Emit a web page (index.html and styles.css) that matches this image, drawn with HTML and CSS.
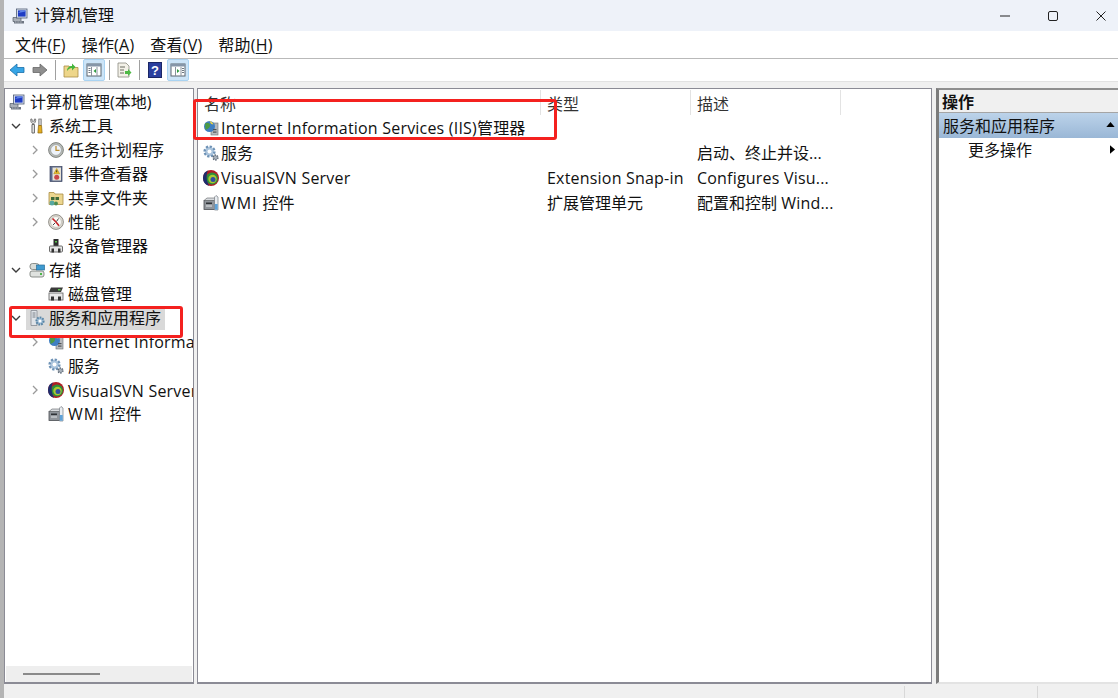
FILE: index.html
```html
<!DOCTYPE html>
<html lang="zh-CN">
<head>
<meta charset="utf-8">
<title>计算机管理</title>
<link rel="stylesheet" href="styles.css">
</head>
<body>
<svg class="defs" width="0" height="0">
  <symbol id="i-computer" viewBox="0 0 16 16">
    <path d="M1 9.500h8v4H1z" fill="#aab0b8" stroke="#555c66" stroke-width=".7"/>
    <rect x="4.500" y="1" width="10.500" height="9" fill="#dfe6f2" stroke="#4d5a73" stroke-width=".8"/>
    <rect x="5.900" y="2.400" width="7.700" height="6.200" fill="#1f3cc4"/>
    <path d="M6 5l3-2.600h4.600v1z" fill="#5f84e8"/>
    <path d="M2 15.500h10v-2.500H2z" fill="#6f7783"/>
    <path d="M3 14h7" stroke="#d7dade" stroke-width=".7" stroke-dasharray="1 .6"/>
  </symbol>
  <symbol id="i-tools" viewBox="0 0 16 16">
    <path d="M3 6.500h2.400v8.500H3z" fill="#eee" stroke="#666" stroke-width="1"/>
    <path d="M1.800 1c-.4 2.500.5 4.500 2.400 4.500S7 3.500 6.600 1L5.400 1v2.200H3V1z" fill="#e6e6e6" stroke="#666" stroke-width=".8"/>
    <rect x="9.800" y="1" width="2.400" height="6.500" fill="#cfcfcf" stroke="#666" stroke-width=".7"/>
    <path d="M9.500 7.500h3l.6 7.500H8.900z" fill="#e5ad1f" stroke="#8a6510" stroke-width=".7"/>
  </symbol>
  <symbol id="i-clock" viewBox="0 0 16 16">
    <circle cx="8" cy="8" r="7.400" fill="#b9bdb9" stroke="#6a6d69" stroke-width=".8"/>
    <circle cx="8" cy="8" r="5.400" fill="#eef3fa" stroke="#8c8f8c" stroke-width=".6"/>
    <path d="M8 4v4.300h3.500" fill="none" stroke="#b98a2a" stroke-width="1.200"/>
  </symbol>
  <symbol id="i-event" viewBox="0 0 16 16">
    <rect x="2" y="0.500" width="12" height="15" fill="#5b6b8f" stroke="#3c4560" stroke-width=".7"/>
    <rect x="4.500" y="1.500" width="8.500" height="13" fill="#e9e4d6"/>
    <path d="M8.700 2.500l2.900 5.300H5.800z" fill="#f0c020" stroke="#a37c10" stroke-width=".5"/>
    <path d="M8.700 4.300v2" stroke="#333"/>
    <circle cx="8.700" cy="11.300" r="2.500" fill="#c9474a"/>
  </symbol>
  <symbol id="i-share" viewBox="0 0 16 16">
    <path d="M1 2.500h5l1 1.500h8v10.500H1z" fill="#ecd68f" stroke="#a98e45" stroke-width=".8"/>
    <path d="M3 7h3.500v3H3zM7.500 7H11v3H7.500z" fill="#3f6a3a"/>
    <circle cx="4" cy="13" r="2.500" fill="#56a7a0"/>
    <circle cx="8" cy="13.500" r="1.900" fill="#4a8b50"/>
  </symbol>
  <symbol id="i-perf" viewBox="0 0 16 16">
    <circle cx="8" cy="8" r="7.400" fill="#dedbd2" stroke="#787670" stroke-width=".8"/>
    <circle cx="8" cy="8" r="5.400" fill="#fbfaf6" stroke="#a7a59e" stroke-width=".5"/>
    <path d="M4.500 4.500L8 8l3 3.800" fill="none" stroke="#c5262a" stroke-width="1.600"/>
    <path d="M10.500 4.500l-2 3M5 11l2-2" stroke="#444" stroke-width="1"/>
  </symbol>
  <symbol id="i-device" viewBox="0 0 16 16">
    <rect x="5.500" y="1" width="5" height="7" fill="#2e2e2e"/>
    <rect x="7" y="3" width="2" height="1.500" fill="#59c84f"/>
    <rect x="1.500" y="8" width="13" height="6" rx="1" fill="#e6e6e6" stroke="#5e5e5e" stroke-width=".9"/>
    <rect x="3.500" y="10.500" width="2.500" height="4" fill="#333"/>
    <rect x="10" y="10.500" width="2.500" height="4" fill="#333"/>
  </symbol>
  <symbol id="i-storage" viewBox="0 0 16 16">
    <rect x="1" y="1.500" width="9" height="6" rx="2.500" fill="#d8dcd8" stroke="#737773" stroke-width=".8"/>
    <rect x="7.500" y="3" width="8" height="5" fill="#3f9ad0" stroke="#2a6d99" stroke-width=".7"/>
    <rect x="1" y="9" width="14" height="6" rx="2" fill="#dfe2df" stroke="#6f736f" stroke-width=".8"/>
    <rect x="11" y="11" width="2" height="2" fill="#4cb648"/>
  </symbol>
  <symbol id="i-disk" viewBox="0 0 16 16">
    <path d="M3 1.500h12l-2 4.500H1z" fill="#3a3a3a"/>
    <rect x="10" y="3" width="2.500" height="1.500" fill="#5ec24f"/>
    <rect x="1" y="7" width="14" height="7" fill="#e8e8e8" stroke="#5e5e5e" stroke-width=".8"/>
    <rect x="3" y="10.500" width="3" height="4" fill="#333"/>
    <rect x="10" y="10.500" width="3" height="4" fill="#333"/>
  </symbol>
  <symbol id="i-apps" viewBox="0 0 16 16">
    <path d="M2 0.500h6v15H2z" fill="#dfe3e8" stroke="#868b93" stroke-width=".8"/>
    <path d="M3.500 3h3M3.500 5h3M3.500 7h3" stroke="#7a8088"/>
    <circle cx="11" cy="11" r="3.600" fill="#9dbcd6" stroke="#5b86a6" stroke-width="2" stroke-dasharray="1.700 1"/>
    <circle cx="11" cy="11" r="1.500" fill="#fff"/>
  </symbol>
  <symbol id="i-iis" viewBox="0 0 16 16">
    <rect x="8" y="3" width="7" height="12" fill="#b6b9bc" stroke="#6c6f72" stroke-width=".6"/>
    <circle cx="6.500" cy="6.500" r="5.500" fill="#3f7fc2"/>
    <path d="M2 3.500c2.500-1.500 4.500-.5 5 1.500S5 9 2.500 10z" fill="#4c9a45"/>
    <path d="M6.500 1c2 .5 3.500 1.500 4 3.500L8 4z" fill="#e9d24a"/>
    <rect x="10" y="9" width="3.500" height="1.200" fill="#4f5255"/>
    <rect x="10" y="11.500" width="3.500" height="1.200" fill="#4f5255"/>
  </symbol>
  <symbol id="i-gear" viewBox="0 0 16 16">
    <circle cx="6.500" cy="6.500" r="4.800" fill="#c4d6e8" stroke="#6f93b6" stroke-width="2.600" stroke-dasharray="2.200 1.500"/>
    <circle cx="6.500" cy="6.500" r="3.700" fill="#a9c3dc"/>
    <circle cx="6.500" cy="6.500" r="2" fill="#fff"/>
    <circle cx="12.500" cy="12.500" r="2.300" fill="#aab3bd" stroke="#5d6875" stroke-width="1.700" stroke-dasharray="1.300 .9"/>
  </symbol>
  <symbol id="i-svn" viewBox="0 0 16 16">
    <circle cx="8" cy="8" r="8" fill="#b01e24"/>
    <circle cx="9" cy="8.500" r="6" fill="#2f8f3a"/>
    <circle cx="9.500" cy="9" r="4.200" fill="#a9c92f"/>
    <circle cx="10" cy="9.500" r="2.500" fill="#2f4f9e"/>
    <path d="M0 8a8 8 0 0 1 5-7.400C3 4 3 10 6 15.700A8 8 0 0 1 0 8z" fill="#1d2d6e"/>
  </symbol>
  <symbol id="i-wmi" viewBox="0 0 16 16">
    <rect x="1" y="5.500" width="11" height="9" fill="#8f949a" stroke="#4a4d52" stroke-width=".8"/>
    <path d="M1 5.500l3-2.500h9l-1 2.500z" fill="#d8dbde" stroke="#5b5e62" stroke-width=".6"/>
    <rect x="3" y="7.500" width="6" height="1.500" fill="#2f3236"/>
    <rect x="3" y="10.500" width="6" height="1" fill="#e3e5e8"/>
    <path d="M13 .5l2 1.500v13h-3.500V2z" fill="#e9edf1" stroke="#767b82" stroke-width=".7"/>
    <rect x="11.800" y="9" width="2.900" height="5.700" fill="#5fa2d8"/>
  </symbol>
  <symbol id="chev-r" viewBox="0 0 8 10"><path d="M2 1l4 4-4 4" fill="none" stroke="#9a9a9a" stroke-width="1.300"/></symbol>
  <symbol id="chev-d" viewBox="0 0 10 8"><path d="M1 2l4 4 4-4" fill="none" stroke="#3c3c3c" stroke-width="1.400"/></symbol>
</svg>

<div class="window">
  <header class="titlebar">
    <svg class="ico title-ico"><use href="#i-computer"/></svg>
    <span class="title-text">计算机管理</span>
    <div class="win-controls">
      <svg class="win-btn" viewBox="0 0 12 12"><path d="M1 6h10" stroke="#222" stroke-width="1"/></svg>
      <svg class="win-btn" viewBox="0 0 12 12"><rect x="1.500" y="1.500" width="9" height="9" rx="1.500" fill="none" stroke="#222" stroke-width="1"/></svg>
      <svg class="win-btn" viewBox="0 0 12 12"><path d="M1.500 1.500l9 9M10.500 1.500l-9 9" stroke="#222" stroke-width="1"/></svg>
    </div>
  </header>

  <nav class="menubar">
    <span class="menu-item">文件(<u>F</u>)</span>
    <span class="menu-item">操作(<u>A</u>)</span>
    <span class="menu-item">查看(<u>V</u>)</span>
    <span class="menu-item">帮助(<u>H</u>)</span>
  </nav>

  <div class="toolbar">
    <span class="tb-btn"><svg class="tb-ico" viewBox="0 0 16 16"><path d="M8 2L1 8l7 6v-3.500h7v-5H8z" fill="#37a5e6" stroke="#1a6ea8" stroke-width=".8"/></svg></span>
    <span class="tb-btn"><svg class="tb-ico" viewBox="0 0 16 16"><path d="M8 2l7 6-7 6v-3.500H1v-5h7z" fill="#8f8f8f" stroke="#666" stroke-width=".8"/></svg></span>
    <span class="tb-sep"></span>
    <span class="tb-btn"><svg class="tb-ico" viewBox="0 0 16 16"><path d="M1 4h5l1 1.500h8V15H1z" fill="#eed68a" stroke="#a98e45" stroke-width=".8"/><path d="M4 9c0-3 2-5 5-5V1.500l3.500 3.500L9 8.500V6c-2 0-3.500 1-5 3z" fill="#45b53c"/></svg></span>
    <span class="tb-btn on"><svg class="tb-ico" viewBox="0 0 16 16"><rect x="1" y="2" width="14" height="12" fill="#fff" stroke="#5c6670"/><rect x="1" y="2" width="14" height="2.500" fill="#8696a8"/><path d="M5.500 5v9M11 5v9" stroke="#8a939c"/><path d="M2.500 6.500h2M2.500 8.500h2M2.500 10.500h2" stroke="#6d7780"/><path d="M10 7v4L7.500 9z" fill="#2c9b3d"/></svg></span>
    <span class="tb-sep tight"></span>
    <span class="tb-btn"><svg class="tb-ico" viewBox="0 0 16 16"><path d="M2 1h8l3 3v11H2z" fill="#f3f1e8" stroke="#8b8b80" stroke-width=".8"/><path d="M4 5h5M4 8h4M4 11h4" stroke="#6b6b60"/><path d="M9 9h3V7l3.500 3.500L12 14v-2H9z" fill="#4fb946"/></svg></span>
    <span class="tb-sep"></span>
    <span class="tb-btn"><svg class="tb-ico" viewBox="0 0 16 16"><rect x="1.500" y="0.500" width="13" height="15" fill="#2b3f9e" stroke="#1b2766"/><text x="8" y="13" class="tb-q">?</text></svg></span>
    <span class="tb-btn on"><svg class="tb-ico" viewBox="0 0 16 16"><rect x="1" y="2" width="14" height="12" fill="#fff" stroke="#5c6670"/><rect x="1" y="2" width="14" height="2.500" fill="#8696a8"/><path d="M5.500 5v9M11 5v9" stroke="#8a939c"/><path d="M12 6.500h2M12 8.500h2M12 10.500h2" stroke="#6d7780"/><path d="M7 7v4l2.500-2z" fill="#2c9b3d"/></svg></span>
  </div>

  <main class="panes">
    <section class="pane tree-pane">
      <ul class="tree">
        <li class="node root"><span class="twist"></span><svg class="ico"><use href="#i-computer"/></svg><span class="label">计算机管理(本地)</span></li>
        <li class="node l1"><svg class="twist"><use href="#chev-d"/></svg><svg class="ico"><use href="#i-tools"/></svg><span class="label">系统工具</span></li>
        <li class="node l2"><svg class="twist"><use href="#chev-r"/></svg><svg class="ico"><use href="#i-clock"/></svg><span class="label">任务计划程序</span></li>
        <li class="node l2"><svg class="twist"><use href="#chev-r"/></svg><svg class="ico"><use href="#i-event"/></svg><span class="label">事件查看器</span></li>
        <li class="node l2"><svg class="twist"><use href="#chev-r"/></svg><svg class="ico"><use href="#i-share"/></svg><span class="label">共享文件夹</span></li>
        <li class="node l2"><svg class="twist"><use href="#chev-r"/></svg><svg class="ico"><use href="#i-perf"/></svg><span class="label">性能</span></li>
        <li class="node l2"><span class="twist"></span><svg class="ico"><use href="#i-device"/></svg><span class="label">设备管理器</span></li>
        <li class="node l1"><svg class="twist"><use href="#chev-d"/></svg><svg class="ico"><use href="#i-storage"/></svg><span class="label">存储</span></li>
        <li class="node l2"><span class="twist"></span><svg class="ico"><use href="#i-disk"/></svg><span class="label">磁盘管理</span></li>
        <li class="node l1 selected"><svg class="twist"><use href="#chev-d"/></svg><span class="sel-wrap"><svg class="ico"><use href="#i-apps"/></svg><span class="label">服务和应用程序</span></span></li>
        <li class="node l2"><svg class="twist"><use href="#chev-r"/></svg><svg class="ico"><use href="#i-iis"/></svg><span class="label lat">Internet Information Services (IIS)管理器</span></li>
        <li class="node l2"><span class="twist"></span><svg class="ico"><use href="#i-gear"/></svg><span class="label">服务</span></li>
        <li class="node l2"><svg class="twist"><use href="#chev-r"/></svg><svg class="ico"><use href="#i-svn"/></svg><span class="label lat only">VisualSVN Server</span></li>
        <li class="node l2"><span class="twist"></span><svg class="ico"><use href="#i-wmi"/></svg><span class="label"><span class="wmi">WMI </span>控件</span></li>
      </ul>
      <div class="hscroll"><span class="hthumb"></span></div>
    </section>

    <section class="pane list-pane">
      <div class="list-head">
        <span class="col c-name">名称</span>
        <span class="col c-type">类型</span>
        <span class="col c-desc">描述</span>
      </div>
      <div class="list-row"><span class="cell c-name"><svg class="ico"><use href="#i-iis"/></svg><span class="lat">Internet Information Services (IIS)管理器</span></span><span class="cell c-type"></span><span class="cell c-desc"></span></div>
      <div class="list-row"><span class="cell c-name"><svg class="ico"><use href="#i-gear"/></svg><span>服务</span></span><span class="cell c-type"></span><span class="cell c-desc"><span>启动、终止并设...</span></span></div>
      <div class="list-row"><span class="cell c-name"><svg class="ico"><use href="#i-svn"/></svg><span class="lat only">VisualSVN Server</span></span><span class="cell c-type"><span class="lat only">Extension Snap-in</span></span><span class="cell c-desc"><span class="lat only">Configures Visu...</span></span></div>
      <div class="list-row"><span class="cell c-name"><svg class="ico"><use href="#i-wmi"/></svg><span><span class="wmi">WMI </span>控件</span></span><span class="cell c-type"><span>扩展管理单元</span></span><span class="cell c-desc"><span>配置和控制 <span class="lat">Wind...</span></span></span></div>
    </section>

    <section class="pane action-pane">
      <div class="action-title">操作</div>
      <div class="action-group"><span>服务和应用程序</span><svg class="tri" viewBox="0 0 10 6"><path d="M0 6l5-6 5 6z"/></svg></div>
      <div class="action-item"><span>更多操作</span><svg class="tri-r" viewBox="0 0 6 10"><path d="M0 0l6 5-6 5z"/></svg></div>
    </section>
  </main>

  <footer class="statusbar">
    <span class="st st-a"></span><span class="st st-b"></span><span class="st st-c"></span>
  </footer>
</div>

<div class="mark mark-list"></div>
<div class="mark mark-tree"></div>
</body>
</html>
```

FILE: styles.css
```css
* { box-sizing: border-box; }
html, body { margin: 0; height: 100%; }
body {
  position: relative;
  width: 1118px;
  height: 698px;
  overflow: hidden;
  background: #b4b4b4;
  font-family: "Open Sans", "Noto Sans CJK SC", sans-serif;
  font-size: 16px;
  color: #111;
}
.defs { position: absolute; }
.window {
  margin-left: 4px;
  width: 1114px;
  height: 698px;
  display: flex;
  flex-direction: column;
  background: #f0f0f0;
}
.ico { width: 16px; height: 16px; flex: none; }
.lat { letter-spacing: .2px; }
.wmi { letter-spacing: .9px; }

.titlebar {
  height: 31px;
  flex: none;
  display: flex;
  align-items: center;
  background: #eef2f9;
  padding-left: 8px;
}
.title-text { margin-left: 6px; line-height: 30px; padding-bottom: 2px; }
.win-controls { margin-left: auto; display: flex; align-items: center; gap: 36px; padding-right: 11px; }
.win-btn { width: 12px; height: 12px; }

.menubar {
  height: 28px;
  flex: none;
  display: flex;
  align-items: center;
  gap: 16px;
  padding: 0 0 2px 11px;
  background: #fff;
  border-bottom: 1px solid #b9b9b9;
}
.menu-item { letter-spacing: .2px; }
.menu-item u { text-underline-offset: 2px; }

.toolbar {
  height: 23px;
  flex: none;
  display: flex;
  align-items: center;
  gap: 1px;
  padding-left: 2px;
  background: #fff;
  border-bottom: 1px solid #e2e2e2;
}
.tb-btn {
  width: 22px;
  height: 22px;
  display: flex;
  align-items: center;
  justify-content: center;
  border: 1px solid transparent;
  border-radius: 2px;
}
.tb-btn.on { background: #cce4f7; border-color: #a9d3f2; }
.tb-ico { width: 16px; height: 16px; }
.tb-q { font-size: 13px; font-weight: 700; fill: #fff; text-anchor: middle; font-family: "Liberation Sans", sans-serif; }
.tb-sep { width: 1px; height: 20px; background: #a0a0a0; margin: 0 3px; }
.tb-sep.tight { margin: 0 2px 0 3px; }

.panes {
  flex: 1;
  min-height: 0;
  display: grid;
  grid-template-columns: 190px 735px 1fr;
  column-gap: 3px;
  padding-top: 6px;
  align-items: stretch;
}
.pane { background: #fff; min-width: 0; overflow: hidden; }

.tree-pane {
  display: flex;
  flex-direction: column;
  border: 1px solid #8b8b95;
  border-width: 1px 1px 2px 1px;
}
.tree { list-style: none; margin: 0; padding: 1px 0 0; flex: 1; min-height: 0; }
.node {
  height: 24px;
  display: flex;
  align-items: center;
  white-space: nowrap;
}
.label { padding-bottom: 2px; }
.label.only { padding-top: 1px; padding-bottom: 0; }
.twist { width: 10px; height: 10px; flex: none; display: block; }
.root { padding-left: 4px; }
.root .twist { width: 0; }
.root .label { margin-left: 5px; }
.l1 { padding-left: 6px; }
.l1 .twist { margin-right: 8px; }
.l1 .label { margin-left: 4px; }
.l2 { padding-left: 25px; }
.l2 .twist { margin-right: 8px; }
.l2 .label { margin-left: 4px; }
.sel-wrap { display: flex; align-items: center; background: #d9d9d9; height: 23px; padding-right: 4px; margin-left: -3px; padding-left: 3px; }

.hscroll {
  height: 16px;
  flex: none;
  margin: 0 1px;
  background: #eeeeee;
  display: flex;
  align-items: center;
  padding-left: 17px;
}
.hthumb { width: 77px; height: 2px; background: #8a8a8a; }

.list-pane { border: 1px solid #8b8b95; border-width: 1px 1px 2px 1px; }
.list-head, .list-row { display: grid; grid-template-columns: 343px 150px 150px; white-space: nowrap; }
.list-head { height: 26px; align-items: center; }
.col { height: 25px; line-height: 28px; padding-left: 6px; border-right: 1px solid #e3e3e3; color: #333; }
.list-row { height: 25px; align-items: center; }
.cell { padding-left: 6px; display: flex; align-items: center; overflow: hidden; height: 25px; }
.cell > span { padding-bottom: 2px; }
.cell > .only { padding-bottom: 0; }
.cell.c-name { padding-left: 5px; }
.cell.c-name .ico { margin-right: 2px; }

.action-pane { border-left: 3px solid #7b7b7b; border-top: 2px solid #8e8e8e; border-bottom: 2px solid #e3e3e3; margin-left: 1px; }
.action-title { height: 23px; padding-left: 3px; background: #f0f0f0; font-weight: 700; line-height: 24px; border-bottom: 1px solid #a5a5a5; }
.action-group {
  height: 25px;
  display: flex;
  align-items: center;
  padding: 0 3px 2px 4px;
  background: linear-gradient(#bcd3ea, #9ab7d6);
}
.tri { width: 9px; height: 5px; margin-left: auto; }
.action-item { height: 24px; display: flex; align-items: center; padding: 0 0 2px 29px; }
.tri-r { width: 5px; height: 9px; margin-left: auto; margin-right: 3px; }

.statusbar {
  height: 14px;
  flex: none;
  display: grid;
  grid-template-columns: 901px 133px 1fr;
}
.st { border-right: 1px solid #d8d8d8; margin-top: 2px; }
.st-c { border-right: none; }

.mark { position: absolute; border: 3px solid #f4211f; border-radius: 3px; pointer-events: none; }
.mark-list { left: 193px; top: 99px; width: 364px; height: 41px; }
.mark-tree { left: 9px; top: 306px; width: 174px; height: 32px; }
```
